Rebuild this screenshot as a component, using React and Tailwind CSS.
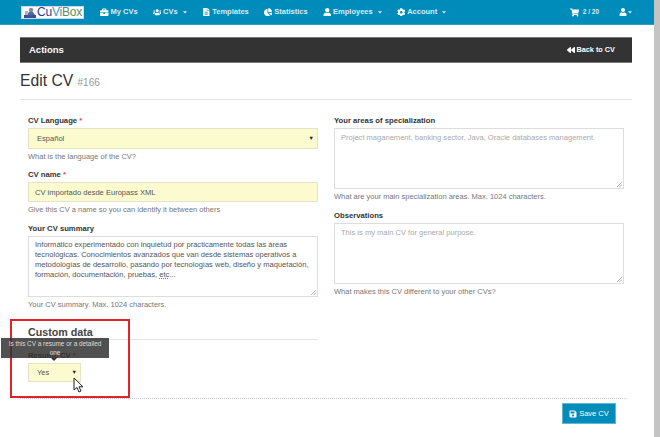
import {
  FaBackward,
  FaBriefcase,
  FaCaretDown,
  FaChartPie,
  FaCog,
  FaFileAlt,
  FaSave,
  FaShoppingCart,
  FaUser,
  FaUsers,
} from "react-icons/fa";

function NavItem({ icon: Icon, label, caret }) {
  return (
    <a className="flex items-center gap-[2px] text-[7.5px] font-bold text-[#d9edf5]">
      <Icon className="text-[8.5px] text-white" />
      <span>{label}</span>
      {caret ? <FaCaretDown className="ml-[3px] h-[6px] w-[4px]" /> : null}
    </a>
  );
}

function Logo() {
  return (
    <div className="flex h-[13px] w-[63px] items-center gap-[1px] border border-[#cfd8e8] bg-white pl-[2px]">
      <svg width="12" height="11" viewBox="0 0 12 11">
        <rect x="0" y="8" width="12" height="3" fill="#3d4f8f" />
        <circle cx="7" cy="3" r="2.2" fill="#7d8aa8" />
        <path d="M3 8 L5 5 H9 L11 8 Z" fill="#56669c" />
        <rect x="1" y="4" width="3" height="4" fill="#a9b3cb" />
      </svg>
      <span className="text-[12px] leading-none tracking-[-0.2px]">
        <span className="text-[#1f3f8f]">Cu</span>
        <span className="text-[#3a9bb5]">Vi</span>
        <span className="text-[#5b8f5f]">Box</span>
      </span>
    </div>
  );
}

function Field({ label, required, help, className, children }) {
  return (
    <div className={className}>
      <label className="block h-[14px] text-[7.7px] leading-[16px] font-bold text-[#333]">
        {label}
        {required ? <span className="text-[#d9534f]"> *</span> : null}
      </label>
      <div className="mt-[1px]">{children}</div>
      {help ? <p className="mt-[2px] h-[12px] text-[7.5px] leading-[12px] text-[#777]">{help}</p> : null}
    </div>
  );
}

function SelectBox({ value, className }) {
  return (
    <div className={`flex items-center justify-between border border-[#e4e4c4] bg-[#fbfbcf] pr-[3px] pl-[8px] text-[7.55px] text-[#555] ${className}`}>
      <span>{value}</span>
      <span className="text-[5.5px] text-[#222]">▼</span>
    </div>
  );
}

function TextBox({ children, muted }) {
  return (
    <div className={`relative h-[61px] border border-[#ddd] bg-white px-[6px] text-[7.55px] leading-[10px] ${muted ? "pt-[4px] text-[#aaa]" : "pt-[3px] text-[#555]"}`}>
      {children}
      <svg className="absolute right-[1px] bottom-[1px]" width="5" height="5" viewBox="0 0 5 5" stroke="#888" strokeWidth="0.6">
        <path d="M0 5 L5 0 M2.5 5 L5 2.5" />
      </svg>
    </div>
  );
}

export default function App() {
  return (
    <div className="flex h-[437px] w-[660px] overflow-hidden bg-white font-['Liberation_Sans',Arial,sans-serif]">
      <div className="relative w-[654px]">
        <nav className="flex h-[25px] items-center border-b border-[#2a9fc0] bg-[#008cba] pl-[21px]">
          <Logo />
          <div className="ml-[16px] flex gap-[15px]">
            <NavItem icon={FaBriefcase} label="My CVs" />
            <NavItem icon={FaUsers} label="CVs" caret />
            <NavItem icon={FaFileAlt} label="Templates" />
            <NavItem icon={FaChartPie} label="Statistics" />
            <NavItem icon={FaUser} label="Employees" caret />
            <NavItem icon={FaCog} label="Account" caret />
          </div>
          <div className="ml-auto flex items-center pr-[22px] text-white">
            <FaShoppingCart className="text-[9px]" />
            <span className="ml-[4px] text-[6.5px] font-bold text-[#d9edf5]">2 / 20</span>
            <FaUser className="ml-[20px] text-[8px]" />
            <FaCaretDown className="ml-[1px] h-[6px] w-[4px] text-[#d9edf5]" />
          </div>
        </nav>

        <main className="pt-[12px] pr-[22px] pl-[20px]">
          <div className="flex h-[26px] items-center justify-between border-t border-b border-[#777] bg-[#333] px-[9px] text-[9.5px] font-bold text-white">
            <span>Actions</span>
            <a className="mr-[8px] flex items-center gap-[1px] text-[7.3px]">
              <FaBackward className="text-[8px]" />
              Back to CV
            </a>
          </div>

          <div className="flex h-[37px] items-center border-b border-[#e5e5e5]">
            <h1 className="text-[15.7px] leading-none text-[#333]">
              Edit CV <small className="text-[10px] text-[#999]">#166</small>
            </h1>
          </div>

          <div className="mt-[13px] flex gap-[16px] px-[8px]">
            <div className="w-[290px]">
              <Field label="CV Language" required help="What is the language of the CV?">
                <SelectBox value="Español" className="h-[21px]" />
              </Field>
              <Field className="mt-[4px]" label="CV name" required help="Give this CV a name so you can identify it between others">
                <div className="flex h-[20px] items-center border border-[#e4e4c4] bg-[#fbfbcf] px-[6px] pt-[1px] text-[7.55px] text-[#555]">
                  CV importado desde Europass XML
                </div>
              </Field>
              <Field className="mt-[5px]" label="Your CV summary" help="Your CV summary. Max. 1024 characters.">
                <TextBox>
                  Informático experimentado con inquietud por prácticamente todas las áreas tecnológicas. Conocimientos
                  avanzados que van desde sistemas operativos a metodologías de desarrollo, pasando por tecnologías web,
                  diseño y maquetación, formación, documentación, pruebas,{" "}
                  <span className="underline decoration-[#d9534f] decoration-dotted">etc</span>...
                </TextBox>
              </Field>
              <h2 className="mt-[14px] h-[15px] border-b border-[#e5e5e5] text-[10.7px] leading-[14px] font-bold text-[#444]">
                Custom data
              </h2>
              <Field className="mt-[8px]" label="Resume CV" required>
                <SelectBox value="Yes" className="h-[19px] w-[53px]" />
              </Field>
            </div>

            <div className="w-[290px]">
              <Field label="Your areas of specialization" help="What are your main specialization areas. Max. 1024 characters.">
                <TextBox muted>Project maganement, banking sector, Java, Oracle databases management.</TextBox>
              </Field>
              <Field className="mt-[5px]" label="Observations" help="What makes this CV different to your other CVs?">
                <TextBox muted>This is my main CV for general purpose.</TextBox>
              </Field>
            </div>
          </div>

          <div className="mt-[16px] mr-[5px] border-t border-dotted border-[#ccc]" />
          <div className="mt-[4px] flex justify-end pr-[16px]">
            <button className="flex h-[21px] w-[54px] items-center justify-center gap-[2px] border border-[#5fb7d4] bg-[#008cba] text-[7.5px] text-white">
              <FaSave className="text-[8px]" />
              Save CV
            </button>
          </div>
        </main>

        {/* annotation drawn over the form */}
        <div className="absolute top-[319px] left-[10px] h-[79px] w-[120px] border-2 border-[#e0242c]" />
        <div className="absolute top-[338px] left-[1px] h-[20px] w-[108px] bg-[#333]/85 pt-[1px] text-center text-[6.4px] leading-[9px] text-[#ddd]">
          Is this CV a resume or a detailed
          <br />
          one
        </div>
        <div className="absolute top-[358px] left-[51px] h-0 w-0 border-x-[3px] border-t-[3px] border-x-transparent border-t-[#333]" />
        <svg className="absolute top-[377px] left-[73px]" width="11" height="16" viewBox="0 0 11 16">
          <path d="M1 1 V13 L4 10.5 L6 15 L8 14 L6 9.8 H10 Z" fill="white" stroke="#222" strokeWidth="1" />
        </svg>
      </div>

      <div className="w-[6px] bg-[#c4c4c4]" />
    </div>
  );
}
